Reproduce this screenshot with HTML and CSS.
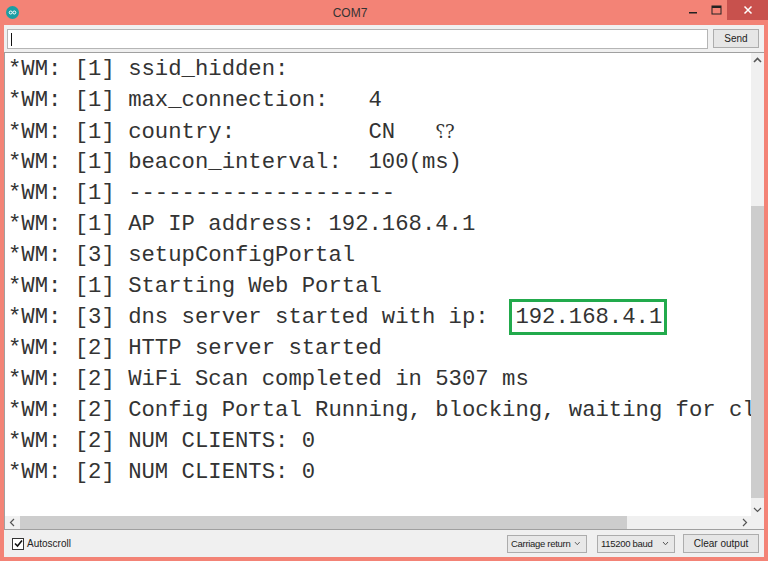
FILE: index.html
```html
<!DOCTYPE html>
<html lang="en">

<head>
    <meta charset="UTF-8">
    <meta name="viewport" content="width=device-width, initial-scale=1.0">
    <title>COM7</title>
    <link rel="stylesheet" href="styles.css">
</head>

<body>
    <div class="window">
        <!-- Title bar -->
        <div class="titlebar">
            <svg class="app-logo" width="13" height="13" viewBox="0 0 13 13">
                <circle cx="6.5" cy="6.5" r="6.5" fill="#1a9ea3"/>
                <path d="M3.2 6.5a1.5 1.5 0 1 0 3 0a1.5 1.5 0 1 0 -3 0M6.8 6.5a1.5 1.5 0 1 0 3 0a1.5 1.5 0 1 0 -3 0" fill="none" stroke="#fff" stroke-width="1"/>
            </svg>
            <div class="title">COM7</div>
            <div class="win-controls">
                <div class="win-btn win-min">
                    <svg width="10" height="10" viewBox="0 0 10 10"><rect x="1" y="7" width="8" height="1.5" fill="#222"/></svg>
                </div>
                <div class="win-btn win-max">
                    <svg width="11" height="10" viewBox="0 0 11 10"><rect x="1" y="1" width="9" height="8" fill="none" stroke="#222" stroke-width="1"/><rect x="1" y="1" width="9" height="2" fill="#222"/></svg>
                </div>
                <div class="win-btn win-close">
                    <svg width="10" height="10" viewBox="0 0 10 10"><path d="M1.5 1.5L8.5 8.5M8.5 1.5L1.5 8.5" stroke="#fff" stroke-width="1.5"/></svg>
                </div>
            </div>
        </div>

        <div class="client">
            <!-- Send row -->
            <div class="send-row">
                <div class="send-input"><span class="caret"></span></div>
                <div class="btn">Send</div>
            </div>

            <!-- Output -->
            <div class="monitor">
                <div class="output">
                    <div class="line">*WM: [1] ssid_hidden:</div>
                    <div class="line">*WM: [1] max_connection:   4</div>
                    <div class="line">*WM: [1] country:          CN   <span class="odd">⸮?</span></div>
                    <div class="line">*WM: [1] beacon_interval:  100(ms)</div>
                    <div class="line">*WM: [1] --------------------</div>
                    <div class="line">*WM: [1] AP IP address: 192.168.4.1</div>
                    <div class="line">*WM: [3] setupConfigPortal</div>
                    <div class="line">*WM: [1] Starting Web Portal</div>
                    <div class="line">*WM: [3] dns server started with ip:  <span class="mark">192.168.4.1</span></div>
                    <div class="line">*WM: [2] HTTP server started</div>
                    <div class="line">*WM: [2] WiFi Scan completed in 5307 ms</div>
                    <div class="line">*WM: [2] Config Portal Running, blocking, waiting for cl</div>
                    <div class="line">*WM: [2] NUM CLIENTS: 0</div>
                    <div class="line">*WM: [2] NUM CLIENTS: 0</div>
                </div>

                <div class="vscroll">
                    <div class="arrow">
                        <svg width="9" height="6" viewBox="0 0 9 6"><path d="M1 5L4.5 1.5L8 5" fill="none" stroke="#555" stroke-width="1.6"/></svg>
                    </div>
                    <div class="vtrack">
                        <div class="vthumb"></div>
                    </div>
                    <div class="arrow">
                        <svg width="9" height="6" viewBox="0 0 9 6"><path d="M1 1L4.5 4.5L8 1" fill="none" stroke="#555" stroke-width="1.2"/></svg>
                    </div>
                </div>

                <div class="hscroll">
                    <div class="arrow">
                        <svg width="6" height="9" viewBox="0 0 6 9"><path d="M5 1L1.5 4.5L5 8" fill="none" stroke="#555" stroke-width="1.2"/></svg>
                    </div>
                    <div class="htrack">
                        <div class="hthumb"></div>
                    </div>
                    <div class="arrow">
                        <svg width="6" height="9" viewBox="0 0 6 9"><path d="M1 1L4.5 4.5L1 8" fill="none" stroke="#555" stroke-width="1.2"/></svg>
                    </div>
                </div>
                <div class="corner"></div>
            </div>

            <!-- Bottom bar -->
            <div class="bottom-bar">
                <label class="autoscroll">
                    <span class="checkbox">
                        <svg width="9" height="9" viewBox="0 0 9 9"><path d="M1 4.5L3.5 7L8 1.5" fill="none" stroke="#111" stroke-width="1.6"/></svg>
                    </span>
                    Autoscroll
                </label>
                <div class="spacer"></div>
                <div class="select select-ending"><span>Carriage return</span>
                    <svg width="7" height="5" viewBox="0 0 7 5"><path d="M1 1L3.5 3.8L6 1" fill="none" stroke="#555" stroke-width="1"/></svg>
                </div>
                <div class="select select-baud"><span>115200 baud</span>
                    <svg width="7" height="5" viewBox="0 0 7 5"><path d="M1 1L3.5 3.8L6 1" fill="none" stroke="#555" stroke-width="1"/></svg>
                </div>
                <div class="btn btn-clear">Clear output</div>
            </div>
        </div>
    </div>
</body>

</html>
```

FILE: styles.css
```css
* {
    margin: 0;
    padding: 0;
    box-sizing: border-box;
}

body {
    font-family: 'Liberation Sans', Arial, sans-serif;
    background: #f38376;
    width: 768px;
    height: 561px;
    overflow: hidden;
}

.window {
    width: 768px;
    height: 561px;
    display: flex;
    flex-direction: column;
}

/* Title bar */

.titlebar {
    height: 25px;
    display: flex;
    align-items: flex-start;
}

.app-logo {
    margin: 6px 0 0 6px;
}

.title {
    flex: 1;
    text-align: center;
    font-size: 12px;
    color: #333;
    padding: 6px 0 0 0;
}

.win-controls {
    display: flex;
}

.win-btn {
    height: 20px;
    display: flex;
    align-items: center;
    justify-content: center;
}

.win-min {
    width: 24px;
}

.win-max {
    width: 22px;
}

.win-close {
    width: 41px;
    background: #c8514d;
}

/* Client area */

.client {
    flex: 1;
    margin: 0 4px 4px 4px;
    background: #f0f0f0;
    display: flex;
    flex-direction: column;
}

.send-row {
    display: flex;
    gap: 5px;
    padding: 4px 5px 3px 3px;
}

.send-input {
    flex: 1;
    height: 20px;
    background: white;
    border: 1px solid #b5b5b5;
    padding: 3px 0 0 3px;
}

.caret {
    display: block;
    width: 1px;
    height: 13px;
    background: #111;
}

.btn {
    height: 19px;
    width: 46px;
    border: 1px solid #adadad;
    background: #e6e6e6;
    font-size: 10px;
    color: #222;
    display: flex;
    align-items: center;
    justify-content: center;
    white-space: nowrap;
}

/* Output area */

.monitor {
    flex: 1;
    display: grid;
    grid-template-columns: 1fr 13px;
    grid-template-rows: 1fr 13px;
    background: white;
    border: 1px solid #a0a0a0;
    border-right: none;
    overflow: hidden;
}

.output {
    overflow: hidden;
    padding: 1px 0 0 3px;
    font-family: 'Liberation Mono', 'Courier New', monospace;
    font-size: 22.25px;
    color: #333;
}

.line {
    white-space: pre;
    height: 31px;
    line-height: 31px;
}

.odd {
    font-family: 'DejaVu Serif', serif;
    font-size: 18px;
}

.mark {
    position: relative;
}

.mark::after {
    content: '';
    position: absolute;
    left: -6px;
    right: -5px;
    top: -5px;
    bottom: -5px;
    border: 3px solid #22aa4c;
}

.vscroll {
    background: #f0f0f0;
    display: flex;
    flex-direction: column;
}

.arrow {
    width: 13px;
    height: 13px;
    display: flex;
    align-items: center;
    justify-content: center;
    flex-shrink: 0;
}

.vtrack {
    flex: 1;
    display: flex;
    flex-direction: column;
    justify-content: flex-end;
    padding: 0 0 5px 0;
}

.vthumb {
    height: 292px;
    background: #cdcdcd;
}

.hscroll {
    background: #f0f0f0;
    display: flex;
}

.htrack {
    flex: 1;
    padding: 0 0 0 2px;
}

.hthumb {
    width: 607px;
    height: 13px;
    background: #cdcdcd;
}

.corner {
    background: #f0f0f0;
}

/* Bottom bar */

.bottom-bar {
    height: 27px;
    display: flex;
    align-items: center;
    gap: 10px;
    padding: 0 5px 0 8px;
    font-size: 10px;
    color: #222;
}

.autoscroll {
    display: flex;
    align-items: center;
    gap: 3px;
}

.checkbox {
    width: 12px;
    height: 12px;
    border: 1px solid #333;
    background: white;
    display: flex;
    align-items: center;
    justify-content: center;
}

.spacer {
    flex: 1;
}

.select {
    height: 18px;
    border: 1px solid #acacac;
    background: #e8e8e8;
    display: flex;
    align-items: center;
    justify-content: space-between;
    gap: 4px;
    padding: 0 5px 0 3px;
    white-space: nowrap;
    font-size: 9.5px;
    letter-spacing: -0.3px;
}

.select-ending {
    width: 80px;
}

.select-baud {
    width: 78px;
}

.btn-clear {
    width: 76px;
    height: 19px;
    margin-left: -2px;
}
```
